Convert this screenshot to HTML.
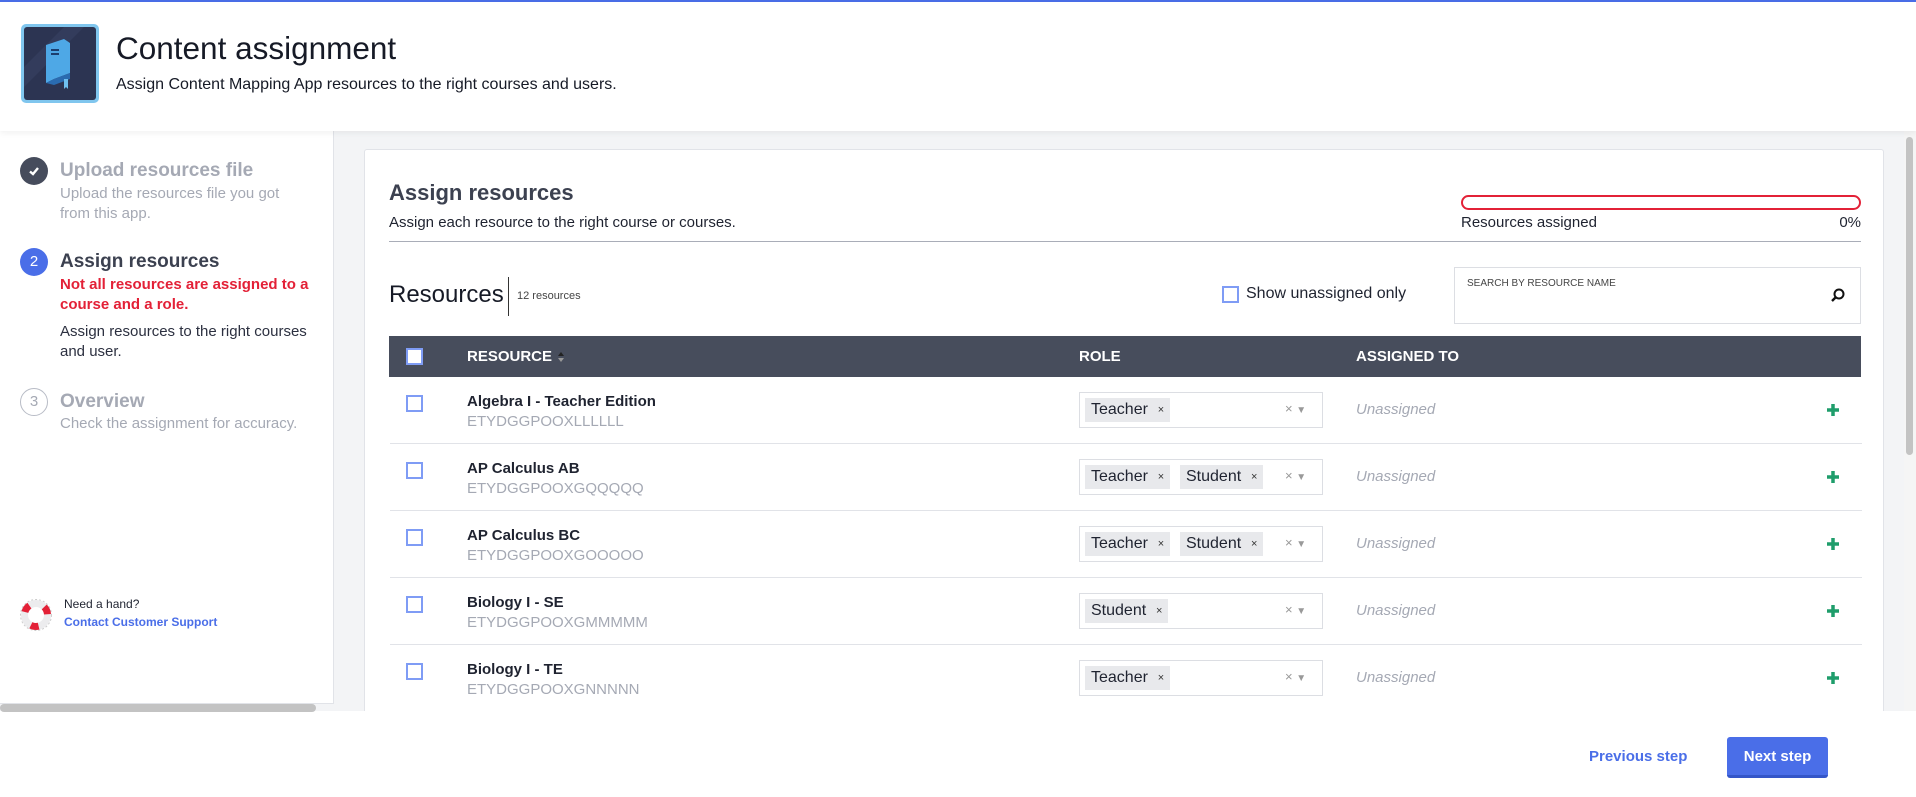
<!DOCTYPE html>
<html><head><meta charset="utf-8"><style>
*{box-sizing:border-box;margin:0;padding:0}
body{width:1916px;height:797px;overflow:hidden;background:#fff;font-family:"Liberation Sans",sans-serif;color:#1f2330;position:relative}
.abs{position:absolute}
.topline{left:0;top:0;width:1916px;height:2px;background:#4a6ee8}
.header{left:0;top:2px;width:1916px;height:129px;background:#fff;box-shadow:0 2px 6px rgba(0,0,0,.06);z-index:2}
.gray{left:0;top:131px;width:1904px;height:580px;background:#f3f4f6}
.side{left:0;top:131px;width:334px;height:573px;background:#fff;border-right:1px solid #e1e3e8;border-bottom:1px solid #e1e3e8}
.main{left:364px;top:149px;width:1520px;height:562px;background:#fff;border:1px solid #e1e3e8;border-bottom:none;border-radius:3px 3px 0 0;overflow:hidden}
.stepc{width:28px;height:28px;border-radius:50%;text-align:center;line-height:28px;font-size:15px}
.st{font-size:19px;font-weight:bold}
.sd{font-size:15px;line-height:20px}
.th{color:#fff;font-size:15px;font-weight:bold}
.cb{width:17px;height:17px;border:2px solid #7f9cf5;background:#fff}
.name{font-size:15px;font-weight:bold;color:#1f2330}
.code{font-size:15px;color:#a5a9b4}
.sel{width:244px;height:36px;border:1px solid #dcdee3;background:#fff}
.tag{position:absolute;top:5px;height:24px;background:#e8e9ec;font-size:16px;line-height:24px;padding-left:6px;color:#1f2330}
.tag span{display:inline-block;font-size:11px;color:#333;margin-left:4px;width:18px;text-align:center;vertical-align:top}
.una{font-size:15px;font-style:italic;color:#a5a9b4}
.plus{width:14px;height:14px}
.sep{height:1px;background:#e1e3e8;width:1472px;left:25px}
</style></head><body>
<div class="abs topline"></div>
<div class="abs header">
  <div class="abs" style="left:21px;top:22px;width:78px;height:79px;border-radius:5px;background:#80c6ee;padding:3px">
    <svg width="72" height="73" viewBox="0 0 72 73"><rect width="72" height="73" rx="3" fill="#2c3452"/><path d="M0 40 L40 0 L60 0 L0 60Z" fill="#333c5c"/><path d="M22 18 L40 12 L46 16 L46 46 L30 52 L22 56Z" fill="#4ea8e6"/><path d="M22 56 L30 52 L46 46 L46 52 L30 58Z" fill="#2a6bb0"/><rect x="27" y="22" width="8" height="2" fill="#1b3e6e"/><rect x="27" y="26" width="8" height="2" fill="#1b3e6e"/><path d="M40 52 L44 52 L44 62 L42 60 L40 62Z" fill="#6fc0f0"/></svg>
  </div>
  <div class="abs" style="left:116px;top:28px;font-size:31.5px;color:#161a26">Content assignment</div>
  <div class="abs" style="left:116px;top:74px;font-size:16px;color:#161a26">Assign Content Mapping App resources to the right courses and users.</div>
</div>
<div class="abs gray"></div>
<div class="abs side">
  <div class="abs stepc" style="left:20px;top:26px;background:#464c5c;color:#fff"><svg width="14" height="14" viewBox="0 0 14 14" style="margin-top:7px"><path d="M3 7.5 L6 10 L11 4" stroke="#fff" stroke-width="2.4" fill="none"/></svg></div>
  <div class="abs st" style="left:60px;top:29px;color:#a5a9b4">Upload resources file</div>
  <div class="abs sd" style="left:60px;top:53px;color:#a5a9b4">Upload the resources file you got<br>from this app.</div>
  <div class="abs stepc" style="left:20px;top:117px;background:#4a6ee8;color:#fff">2</div>
  <div class="abs st" style="left:60px;top:120px;color:#3c4150">Assign resources</div>
  <div class="abs sd" style="left:60px;top:144px;color:#e32137;font-weight:bold">Not all resources are assigned to a<br>course and a role.</div>
  <div class="abs sd" style="left:60px;top:191px;color:#2c3040">Assign resources to the right courses<br>and user.</div>
  <div class="abs stepc" style="left:20px;top:257px;border:1px solid #b8bcc6;color:#a5a9b4;line-height:26px">3</div>
  <div class="abs st" style="left:60px;top:260px;color:#a5a9b4">Overview</div>
  <div class="abs sd" style="left:60px;top:283px;color:#a5a9b4">Check the assignment for accuracy.</div>
  <svg class="abs" style="left:19px;top:467px" width="34" height="34" viewBox="0 0 34 34"><circle cx="17" cy="17" r="15.5" fill="none" stroke="#ccc" stroke-width="1" stroke-dasharray="2 2"/><circle cx="17" cy="17" r="11.5" fill="none" stroke="#ececee" stroke-width="7"/><circle cx="17" cy="17" r="11.5" fill="none" stroke="#e32137" stroke-width="7" stroke-dasharray="8 16.1" transform="rotate(-165 17 17)"/></svg>
  <div class="abs" style="left:64px;top:466px;font-size:12px;color:#1f2330">Need a hand?</div>
  <div class="abs" style="left:64px;top:484px;font-size:12px;color:#4a6ee8;font-weight:bold">Contact Customer Support</div>
</div>
<div class="abs" style="left:0;top:704px;width:316px;height:8px;border-radius:4px;background:#c3c3c3"></div>
<div class="abs" style="left:1904px;top:131px;width:12px;height:580px;background:#f5f5f5"></div>
<div class="abs" style="left:1906px;top:137px;width:7px;height:318px;border-radius:4px;background:#c3c3c3"></div>
<div class="abs main">
  <div class="abs" style="left:24px;top:30px;font-size:22px;font-weight:bold;color:#3c4150">Assign resources</div>
  <div class="abs" style="left:24px;top:64px;font-size:15px;color:#1f2330">Assign each resource to the right course or courses.</div>
  <div class="abs" style="left:1096px;top:45px;width:400px;height:15px;border:2px solid #e32137;border-radius:8px"></div>
  <div class="abs" style="left:1096px;top:64px;font-size:15px">Resources assigned</div>
  <div class="abs" style="left:1460px;top:64px;font-size:15px;width:36px;text-align:right">0%</div>
  <div class="abs" style="left:24px;top:91px;width:1472px;height:1px;background:#a9adb8"></div>
  <div class="abs" style="left:24px;top:131px;font-size:24px;color:#161a26">Resources</div>
  <div class="abs" style="left:143px;top:127px;width:1px;height:39px;background:#333"></div>
  <div class="abs" style="left:152px;top:140px;font-size:11px;color:#444">12 resources</div>
  <div class="abs cb" style="left:857px;top:136px"></div>
  <div class="abs" style="left:881px;top:135px;font-size:16px">Show unassigned only</div>
  <div class="abs" style="left:1089px;top:117px;width:407px;height:57px;border:1px solid #dcdee3"></div>
  <div class="abs" style="left:1102px;top:128px;font-size:10px;color:#444">SEARCH BY RESOURCE NAME</div>
  <svg class="abs" style="left:1465px;top:137px" width="16" height="16" viewBox="0 0 16 16"><circle cx="9" cy="7" r="4.5" fill="none" stroke="#111" stroke-width="2"/><path d="M6 10 L2 14" stroke="#111" stroke-width="2.4"/></svg>
  <div class="abs" style="left:24px;top:186px;width:1472px;height:41px;background:#474d5c"></div>
  <div class="abs cb" style="left:41px;top:198px"></div>
  <div class="abs th" style="left:102px;top:198px">RESOURCE</div>
  <svg class="abs" style="left:193px;top:201px" width="6" height="12" viewBox="0 0 6 12"><path d="M0 5 L3 1 L6 5Z" fill="#222"/><path d="M0 7 L3 11 L6 7Z" fill="#999"/></svg>
  <div class="abs th" style="left:714px;top:198px">ROLE</div>
  <div class="abs th" style="left:991px;top:198px">ASSIGNED TO</div>

  <div class="abs" style="left:0;top:227px;width:1520px;height:67px">
    <div class="abs cb" style="left:41px;top:18px"></div>
    <div class="abs name" style="left:102px;top:16px">Algebra I - Teacher Edition</div>
    <div class="abs code" style="left:102px;top:36px">ETYDGGPOOXLLLLLL</div>
    <div class="abs sel" style="left:714px;top:15px"><div class="tag" style="left:5px">Teacher<span>×</span></div><div class="abs" style="left:205px;top:8px;font-size:13px;color:#999">× <span style="font-size:10px">▼</span></div></div>
    <div class="abs una" style="left:991px;top:24px">Unassigned</div>
    <svg class="abs plus" style="left:1461px;top:26px" viewBox="0 0 14 14"><path d="M7 1V13M1 7H13" stroke="#1f9d6b" stroke-width="3.5"/></svg>
  </div>
  <div class="abs sep" style="top:293px"></div>
  <div class="abs" style="left:0;top:294px;width:1520px;height:67px">
    <div class="abs cb" style="left:41px;top:18px"></div>
    <div class="abs name" style="left:102px;top:16px">AP Calculus AB</div>
    <div class="abs code" style="left:102px;top:36px">ETYDGGPOOXGQQQQQ</div>
    <div class="abs sel" style="left:714px;top:15px"><div class="tag" style="left:5px">Teacher<span>×</span></div><div class="tag" style="left:100px">Student<span>×</span></div><div class="abs" style="left:205px;top:8px;font-size:13px;color:#999">× <span style="font-size:10px">▼</span></div></div>
    <div class="abs una" style="left:991px;top:24px">Unassigned</div>
    <svg class="abs plus" style="left:1461px;top:26px" viewBox="0 0 14 14"><path d="M7 1V13M1 7H13" stroke="#1f9d6b" stroke-width="3.5"/></svg>
  </div>
  <div class="abs sep" style="top:360px"></div>
  <div class="abs" style="left:0;top:361px;width:1520px;height:67px">
    <div class="abs cb" style="left:41px;top:18px"></div>
    <div class="abs name" style="left:102px;top:16px">AP Calculus BC</div>
    <div class="abs code" style="left:102px;top:36px">ETYDGGPOOXGOOOOO</div>
    <div class="abs sel" style="left:714px;top:15px"><div class="tag" style="left:5px">Teacher<span>×</span></div><div class="tag" style="left:100px">Student<span>×</span></div><div class="abs" style="left:205px;top:8px;font-size:13px;color:#999">× <span style="font-size:10px">▼</span></div></div>
    <div class="abs una" style="left:991px;top:24px">Unassigned</div>
    <svg class="abs plus" style="left:1461px;top:26px" viewBox="0 0 14 14"><path d="M7 1V13M1 7H13" stroke="#1f9d6b" stroke-width="3.5"/></svg>
  </div>
  <div class="abs sep" style="top:427px"></div>
  <div class="abs" style="left:0;top:428px;width:1520px;height:67px">
    <div class="abs cb" style="left:41px;top:18px"></div>
    <div class="abs name" style="left:102px;top:16px">Biology I - SE</div>
    <div class="abs code" style="left:102px;top:36px">ETYDGGPOOXGMMMMM</div>
    <div class="abs sel" style="left:714px;top:15px"><div class="tag" style="left:5px">Student<span>×</span></div><div class="abs" style="left:205px;top:8px;font-size:13px;color:#999">× <span style="font-size:10px">▼</span></div></div>
    <div class="abs una" style="left:991px;top:24px">Unassigned</div>
    <svg class="abs plus" style="left:1461px;top:26px" viewBox="0 0 14 14"><path d="M7 1V13M1 7H13" stroke="#1f9d6b" stroke-width="3.5"/></svg>
  </div>
  <div class="abs sep" style="top:494px"></div>
  <div class="abs" style="left:0;top:495px;width:1520px;height:67px">
    <div class="abs cb" style="left:41px;top:18px"></div>
    <div class="abs name" style="left:102px;top:16px">Biology I - TE</div>
    <div class="abs code" style="left:102px;top:36px">ETYDGGPOOXGNNNNN</div>
    <div class="abs sel" style="left:714px;top:15px"><div class="tag" style="left:5px">Teacher<span>×</span></div><div class="abs" style="left:205px;top:8px;font-size:13px;color:#999">× <span style="font-size:10px">▼</span></div></div>
    <div class="abs una" style="left:991px;top:24px">Unassigned</div>
    <svg class="abs plus" style="left:1461px;top:26px" viewBox="0 0 14 14"><path d="M7 1V13M1 7H13" stroke="#1f9d6b" stroke-width="3.5"/></svg>
  </div>
  <div class="abs sep" style="top:561px"></div>
</div>
<div class="abs" style="left:1589px;top:748px;font-size:15px;font-weight:bold;color:#4a6ee8">Previous step</div>
<div class="abs" style="left:1727px;top:737px;width:101px;height:41px;border-radius:3px;background:#4a6ee8;border-bottom:3px solid #3456c8;color:#fff;font-size:15px;font-weight:bold;text-align:center;line-height:39px">Next step</div>
</body></html>
